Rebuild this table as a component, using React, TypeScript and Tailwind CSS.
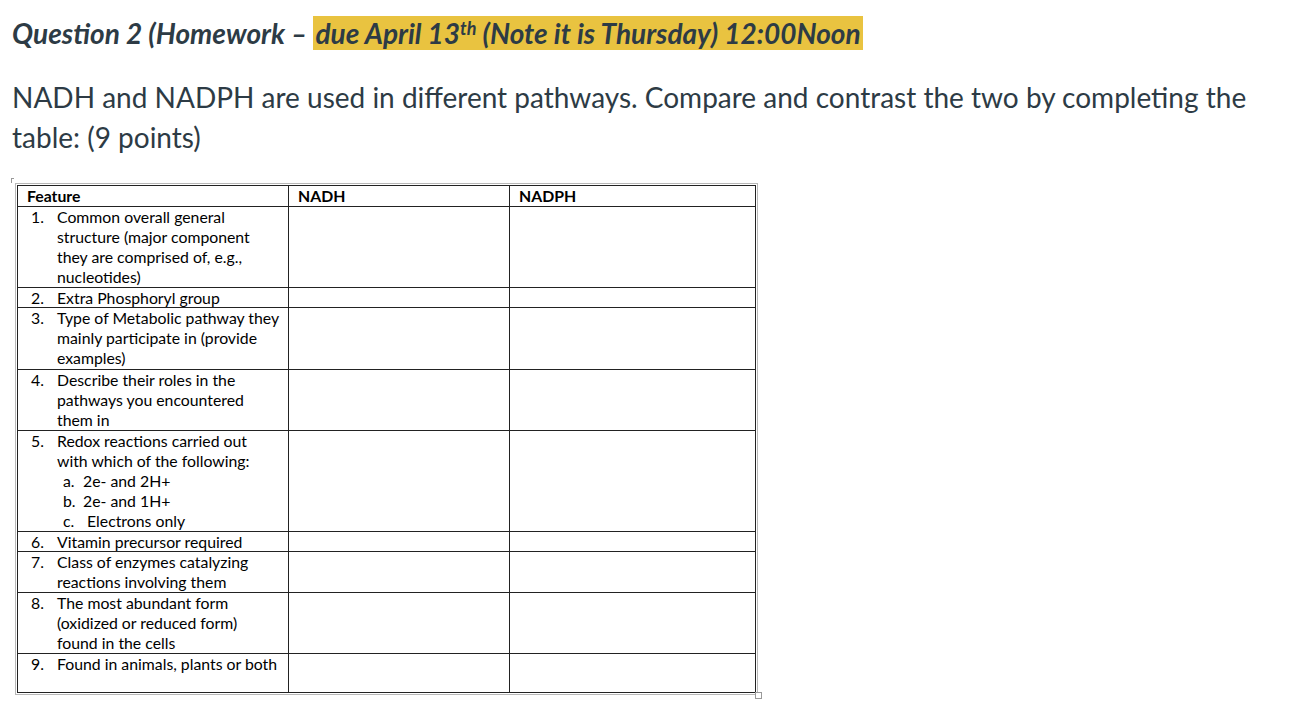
import React from "react";

type Row = {
  n: string;
  lines: string[];
  subs?: { k: string; t: string }[];
  h: string;
};

const ROWS: Row[] = [
  {
    n: "1.",
    lines: ["Common overall general", "structure (major component", "they are comprised of, e.g.,", "nucleotides)"],
    h: "h-[81px]",
  },
  { n: "2.", lines: ["Extra Phosphoryl group"], h: "h-[20px]" },
  {
    n: "3.",
    lines: ["Type of Metabolic pathway they", "mainly participate in (provide", "examples)"],
    h: "h-[62px]",
  },
  {
    n: "4.",
    lines: ["Describe their roles in the", "pathways you encountered", "them in"],
    h: "h-[61px]",
  },
  {
    n: "5.",
    lines: ["Redox reactions carried out", "with which of the following:"],
    subs: [
      { k: "a.", t: "2e- and 2H+" },
      { k: "b.", t: "2e- and 1H+" },
      { k: "c.", t: " Electrons only" },
    ],
    h: "h-[101px]",
  },
  { n: "6.", lines: ["Vitamin precursor required"], h: "h-[20px]" },
  { n: "7.", lines: ["Class of enzymes catalyzing", "reactions involving them"], h: "h-[41px]" },
  {
    n: "8.",
    lines: ["The most abundant form", "(oxidized or reduced form)", "found in the cells"],
    h: "h-[61px]",
  },
  { n: "9.", lines: ["Found in animals, plants or both"], h: "h-[39px]" },
];

function FeatureCell({ row }: { row: Row }) {
  const single = row.lines.length === 1 && !row.subs;
  return (
    <div className={`flex pl-[13px] ${single ? "h-[19px]" : ""}`}>
      <span className="w-[26px] shrink-0">{row.n}</span>
      <div className="whitespace-nowrap">
        {row.lines.map((l) => (
          <div key={l}>{l}</div>
        ))}
        {row.subs?.map((s) => (
          <div key={s.k} className="flex pl-[6px]">
            <span className="w-[20px] shrink-0">{s.k}</span>
            <span className="whitespace-pre">{s.t}</span>
          </div>
        ))}
      </div>
    </div>
  );
}

export default function App() {
  return (
    <div className="min-h-screen bg-white px-3 pt-[16px] text-[#2d3b45] font-['Lato',sans-serif]">
      <h3 className="text-[28px] leading-[34px] font-bold italic">
        Question 2 (Homework –{" "}
        <span className="bg-[#e9c340] px-[2px]">
          due April 13<sup className="text-[18px]">th</sup> (Note it is Thursday) 12:00Noon
        </span>
      </h3>

      <p className="mt-[27px] text-[28px] leading-[40px] max-w-[1268px]">
        NADH and NADPH are used in different pathways. Compare and contrast the two by completing the table: (9 points)
      </p>

      <div className="relative mt-[26px] ml-[3px] w-fit">
        <span className="absolute -left-[4px] -top-[5px] block w-[3px] h-[5px] border-l border-t border-[#999]" />
        <div className="border border-[#b8b8b8] p-px">
          <table className="border-collapse table-fixed text-[15.8px] leading-[20px] text-black font-['Lato',sans-serif]">
            <colgroup>
              <col className="w-[271px]" />
              <col className="w-[221px]" />
              <col className="w-[246px]" />
            </colgroup>
            <thead>
              <tr className="h-[21px]">
                <th className="border border-[#222] text-left font-bold pl-[9px] align-top">Feature</th>
                <th className="border border-[#222] text-left font-bold pl-[9px] align-top">NADH</th>
                <th className="border border-[#222] text-left font-bold pl-[9px] align-top">NADPH</th>
              </tr>
            </thead>
            <tbody>
              {ROWS.map((r) => (
                <tr key={r.n} className={r.h}>
                  <td className="border border-[#222] align-top p-0">
                    <FeatureCell row={r} />
                  </td>
                  <td className="border border-[#222]" />
                  <td className="border border-[#222]" />
                </tr>
              ))}
            </tbody>
          </table>
        </div>
        <span className="absolute -right-[4px] -bottom-[4px] block w-[7px] h-[7px] bg-white border border-[#999]" />
      </div>
    </div>
  );
}
